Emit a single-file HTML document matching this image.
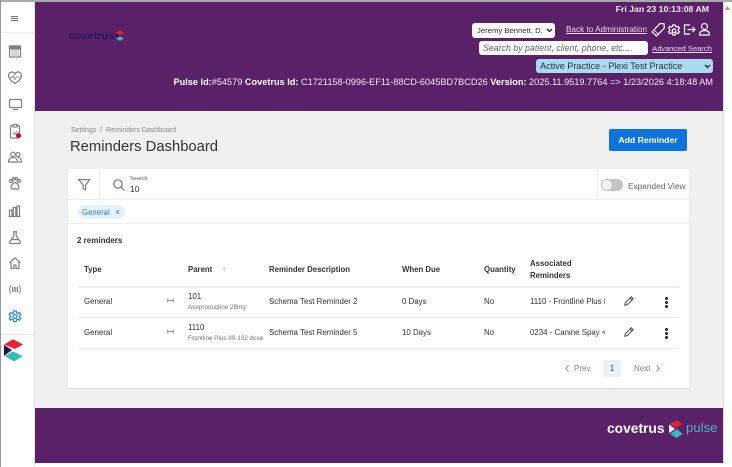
<!DOCTYPE html>
<html><head><meta charset="utf-8"><style>
html,body{margin:0;padding:0;background:#fff}
body{width:732px;height:467px;position:relative;overflow:hidden;font-family:"Liberation Sans",sans-serif;color:#333}
#p{position:absolute;left:0;top:0;width:732px;height:467px;filter:blur(.35px)}
.a{position:absolute;white-space:nowrap}
svg{position:absolute;overflow:visible}
.ic{fill:none;stroke:#808080;stroke-width:1.200}
.w{color:#fff}
.h{font-weight:bold;font-size:7.800px;color:#333}
.c{font-size:7.900px;color:#333}
.l{position:absolute;height:1px;background:#eee}
</style></head><body><div id="p">
<div class="a" style="left:0;top:0;width:732px;height:2px;background:#aaa"></div>
<div class="a" style="left:0;top:0;width:1px;height:467px;background:#999"></div>
<div class="a" style="left:34px;top:2px;width:1px;height:465px;background:#e4e4e4"></div>
<div class="a" style="left:35px;top:2px;width:688px;height:109px;background:#5b2168"></div>
<div class="a" style="left:35px;top:111px;width:688px;height:297px;background:#f0f0f0"></div>
<div class="a" style="left:35px;top:408px;width:688px;height:55px;background:#5b2168"></div>
<div class="a" style="left:723px;top:2px;width:1px;height:461px;background:#ddd"></div>
<div class="a" style="left:1px;top:32px;width:33px;height:1px;background:#eee"></div>
<div class="a" style="left:1px;top:334px;width:33px;height:1px;background:#e8e8e8"></div>
<svg style="left:725px;top:6px" width="5" height="4"><path d="M0 4L2.500 0 5 4z" fill="#999"/></svg>

<div class="a" style="left:11px;top:16px;width:7px;height:1px;background:#777;box-shadow:0 2px 0 #777,0 4px 0 #777"></div>

<svg class="ic" style="left:9px;top:45px" width="12" height="12"><rect x=".5" y="1" width="11" height="11" rx="1"/><rect x=".5" y="1" width="11" height="3" fill="#808080"/><path d="M2.500 6h7M2.500 8h7M2.500 10h7" stroke-dasharray="1 1"/></svg>
<svg class="ic" style="left:8px;top:71px" width="14" height="13"><path d="M7 12.500C3 9.500.5 7.500.5 4.500.5 2.500 2 1 3.800 1 5.200 1 6.400 1.800 7 3c.6-1.200 1.800-2 3.200-2C12 1 13.500 2.500 13.500 4.500c0 3-2.500 5-6.500 8z"/><path d="M1 6.500h3.500l1-2 1.500 4 1.500-2.500h4.500" stroke-width=".8"/></svg>
<svg class="ic" style="left:9px;top:99px" width="13" height="11"><rect x=".5" y=".5" width="12" height="8" rx="1.200"/><path d="M4 10.500h5"/></svg>
<svg class="ic" style="left:10px;top:124px" width="11" height="15"><rect x=".5" y="1.500" width="9" height="12.500" rx="1.200"/><rect x="3" y=".5" width="4" height="2.500" fill="#fff"/><path d="M3 9l1.500 1.500L7 7" stroke-width=".8"/></svg>
<div class="a" style="left:16px;top:133px;width:5px;height:5px;border-radius:50%;background:#d5002b"></div>
<svg class="ic" style="left:8px;top:151px" width="14" height="12"><circle cx="5" cy="3.500" r="2.300"/><circle cx="10" cy="3.500" r="2"/><path d="M.5 11c0-3 2-4.500 4.500-4.500S9.500 8 9.500 11zM10 6.500c2 0 3.500 1.500 3.500 4.500h-3"/></svg>
<svg class="ic" style="left:8px;top:177px" width="14" height="13"><circle cx="3" cy="4" r="1.400"/><circle cx="5.500" cy="1.800" r="1.300"/><circle cx="8.500" cy="1.800" r="1.300"/><circle cx="11" cy="4" r="1.400"/><path d="M7 5.500c-2 0-4 3-4 5 0 1.500 1.500 1.800 2.500 1.500.8-.3 2.200-.3 3 0 1 .3 2.500 0 2.500-1.500 0-2-2-5-4-5z"/></svg>
<svg class="ic" style="left:8px;top:205px" width="13" height="12"><path d="M.5 11.500h12M1.500 11.500V5h2.500v6.500M5.300 11.500V2.500h2.500v9M9 11.500V1h2.500v10.500"/></svg>
<svg class="ic" style="left:9px;top:231px" width="12" height="13"><path d="M4 .7h4M4.800.7v4L.8 11c-.4.800 0 1.500.8 1.500h8.800c.8 0 1.200-.7.800-1.500l-4-6.300V.7M2.800 8.500h6.400"/></svg>
<svg class="ic" style="left:9px;top:257px" width="12" height="12"><path d="M.5 6L6 .8 11.500 6M2 5v6.500h3V8h2v3.500h3V5"/></svg>
<svg class="ic" style="left:9px;top:285px" width="12" height="9"><path d="M1.500.5C.5 3 .5 6 1.500 8.500M10.500.5c1 2.500 1 5.500 0 8M3.500 2v5M5.200 2v5M6.800 2v5M8.500 2v5" stroke-width="1"/></svg>
<svg style="left:8px;top:310px;fill:none;stroke:#1b84e0;stroke-width:1.200" width="14" height="14"><path d="M5.800 1h2.400l.4 1.800 1.400.6 1.600-1 1.200 2-1.300 1.200v1.400l1.300 1.200-1.200 2-1.600-1-1.400.6-.4 1.800H5.800l-.4-1.800-1.400-.6-1.600 1-1.200-2 1.300-1.200V5.600L1.200 4.400l1.200-2 1.600 1 1.400-.6z"/><circle cx="7" cy="6.500" r="2"/></svg>

<svg style="left:0;top:335px" width="30" height="30"><path d="M4 9.500L13 4.300 23 9.500 15 14z" fill="#e8212e"/><path d="M4 10l8 5-8 6z" fill="#14145a"/><path d="M5 21l8-4.500 10 4.500-9 5.500z" fill="#33bfb6"/></svg>

<!-- header logo -->
<div class="a" style="left:69px;top:30px;font-size:10.500px;font-weight:bold;color:#1e1a66;letter-spacing:.2px">covetrus</div>
<svg style="left:115px;top:30px" width="10" height="12"><path d="M1 2.500L5 0l4 2.500-4 2.500z" fill="#e8212e"/><path d="M1 3.500l3 2-3 2z" fill="#14145a"/><path d="M1 8.500L5 6.500l4 2-4 2.500z" fill="#33bfb6"/></svg>

<!-- header right -->
<div class="a w" style="right:23px;top:4px;font-size:8.700px;font-weight:bold;color:#f2e8f5">Fri Jan 23 10:13:08 AM</div>
<div class="a" style="left:472px;top:23px;width:83px;height:15px;background:#fff;border-radius:3px;font-size:7.700px;line-height:15px;text-indent:5px;color:#333">Jeremy Bennett, D.</div>
<svg style="left:546px;top:28px" width="7" height="5"><path d="M1 1l2.500 2.500L6 1" fill="none" stroke="#222" stroke-width="1.300"/></svg>
<div class="a" style="left:566px;top:25px;font-size:8.200px;color:#e8d8ec;text-decoration:underline">Back to Administration</div>
<svg style="left:651px;top:22px;fill:none;stroke:#fff;stroke-width:1.200" width="70" height="15"><path d="M1 10L9 1.500l4 .2.300 4.300L5.500 14z"/><path d="M3 8l4 4" stroke-width=".8"/><path d="M21.800 3h2.400l.4 1.500 1.300.6 1.400-.8 1.200 2-1.200 1v1.400l1.200 1-1.200 2-1.400-.8-1.300.6-.4 1.500h-2.400l-.4-1.500-1.300-.6-1.400.8-1.200-2 1.200-1V7.300l-1.200-1 1.200-2 1.400.8 1.300-.6z"/><circle cx="23" cy="8.800" r="1.800"/><path d="M39 3h-5.500v9H39M36.500 7.500h7.500M41.500 5l2.500 2.500-2.500 2.500"/><circle cx="53.500" cy="4.500" r="3"/><path d="M48.500 13c0-3 2-4.500 5-4.500s5 1.500 5 4.500z"/></svg>
<div class="a" style="left:479px;top:41px;width:169px;height:14px;background:#fff;border-radius:3px;font-size:8.800px;line-height:14px;text-indent:4px;font-style:italic;color:#666">Search by patient, client, phone, etc....</div>
<div class="a" style="left:652px;top:44px;font-size:7.600px;color:#e8d8ec;text-decoration:underline">Advanced Search</div>
<div class="a" style="left:536px;top:59px;width:177px;height:14px;background:#a8dcec;border-radius:3px;font-size:9.100px;line-height:15px;text-indent:4px;color:#2c2c4c">Active Practice - Plexi Test Practice</div>
<svg style="left:704px;top:64px" width="7" height="5"><path d="M1 1l2.500 2.500L6 1" fill="none" stroke="#222" stroke-width="1.300"/></svg>
<div class="a" style="right:19px;top:77px;font-size:9.180px;color:#f2e8f5"><b style="color:#fff">Pulse Id:</b>#54579 <b style="color:#fff">Covetrus Id:</b> C1721158-0996-EF11-88CD-6045BD7BCD26 <b style="color:#fff">Version:</b> 2025.11.9519.7764 =&gt; 1/23/2026 4:18:48 AM</div>

<!-- page head -->
<div class="a" style="left:71px;top:127px;font-size:7px;color:#888">Settings &nbsp;/&nbsp; Reminders Dashboard</div>
<div class="a" style="left:70px;top:139px;font-size:14.800px;color:#333">Reminders Dashboard</div>
<div class="a" style="left:609px;top:129px;width:78px;height:22px;background:#0e74dd;border-radius:2px;color:#fff;font-size:8.700px;font-weight:bold;line-height:22px;text-align:center">Add Reminder</div>

<!-- card -->
<div class="a" style="left:68px;top:169px;width:621px;height:219px;background:#fff;box-shadow:0 1px 1px #ddd"></div>
<div class="l" style="left:68px;top:199px;width:621px"></div>
<div class="l" style="left:68px;top:223px;width:621px"></div>
<div class="a" style="left:99px;top:169px;width:1px;height:30px;background:#eee"></div>
<div class="a" style="left:597px;top:169px;width:1px;height:30px;background:#eee"></div>
<svg style="left:78px;top:179px;fill:none;stroke:#777;stroke-width:1.100" width="13" height="12"><path d="M.7.700h11L7.500 6v5L5.200 9.500V6z"/></svg>
<svg style="left:113px;top:179px;fill:none;stroke:#777;stroke-width:1.200" width="13" height="13"><circle cx="5" cy="5" r="4.200"/><path d="M8 8l3.500 3.500"/></svg>
<div class="a" style="left:130px;top:176px;font-size:5.500px;color:#555">Search</div>
<div class="a" style="left:130px;top:184px;font-size:8.500px;color:#333">10</div>
<div class="a" style="left:601px;top:179px;width:22px;height:12px;border-radius:6px;background:#c4c4c4"></div>
<div class="a" style="left:602px;top:180px;width:10px;height:10px;border-radius:50%;background:#f2f2f2"></div>
<div class="a" style="left:628px;top:181px;font-size:8.300px;color:#666">Expanded View</div>

<div class="a" style="left:78px;top:205px;width:47px;height:14px;border-radius:7px;background:#e4f2fd"></div>
<div class="a" style="left:82px;top:208px;font-size:7.800px;color:#3a7cc0">General</div>
<div class="a" style="left:115px;top:207px;font-size:9px;color:#3a7cc0">×</div>
<div class="a" style="left:77px;top:236px;font-size:8px;font-weight:bold;color:#333">2 reminders</div>

<div class="a h" style="left:84px;top:265px">Type</div>
<div class="a h" style="left:188px;top:265px">Parent</div>
<div class="a" style="left:222px;top:265px;font-size:8px;color:#888">↑</div>
<div class="a h" style="left:269px;top:265px">Reminder Description</div>
<div class="a h" style="left:402px;top:265px">When Due</div>
<div class="a h" style="left:484px;top:265px">Quantity</div>
<div class="a h" style="left:530px;top:259px">Associated</div>
<div class="a h" style="left:530px;top:271px">Reminders</div>
<div class="l" style="left:78px;top:286px;width:601px;height:2px"></div>
<div class="l" style="left:78px;top:317px;width:601px;height:1px"></div>
<div class="l" style="left:78px;top:348px;width:601px;height:1px"></div>

<div class="a c" style="left:84px;top:297px">General</div>
<svg style="left:167px;top:298px;fill:none;stroke:#999" width="7" height="6"><path d="M.7.500v4M6.300.500v4M.7 2.500h5.600" stroke-width="1.100"/></svg>
<div class="a c" style="left:188px;top:292px">101</div>
<div class="a" style="left:188px;top:304px;font-size:6.300px;color:#777">Acepromazine 25mg</div>
<div class="a c" style="left:269px;top:297px">Schema Test Reminder 2</div>
<div class="a c" style="left:402px;top:297px">0 Days</div>
<div class="a c" style="left:484px;top:297px">No</div>
<div class="a c" style="left:530px;top:297px;width:75px;overflow:hidden">1110 - Frontline Plus 89</div>
<svg style="left:624px;top:296px;fill:none;stroke:#555;stroke-width:1.100" width="10" height="10"><path d="M.8 9.200l.6-2.600L7.200.8 9.200 2.800 3.400 8.600zM6 2l2 2"/></svg>
<div class="a" style="left:665px;top:297px;width:3px;height:3px;border-radius:50%;background:#222;box-shadow:0 4px 0 #222,0 8px 0 #222"></div>

<div class="a c" style="left:84px;top:328px">General</div>
<svg style="left:167px;top:329px;fill:none;stroke:#999" width="7" height="6"><path d="M.7.500v4M6.300.500v4M.7 2.500h5.600" stroke-width="1.100"/></svg>
<div class="a c" style="left:188px;top:323px">1110</div>
<div class="a" style="left:188px;top:335px;width:75px;overflow:hidden;font-size:6.300px;color:#777">Frontline Plus 89-132 dose</div>
<div class="a c" style="left:269px;top:328px">Schema Test Reminder 5</div>
<div class="a c" style="left:402px;top:328px">10 Days</div>
<div class="a c" style="left:484px;top:328px">No</div>
<div class="a c" style="left:530px;top:328px;width:75px;overflow:hidden">0234 - Canine Spay &lt;</div>
<svg style="left:624px;top:327px;fill:none;stroke:#555;stroke-width:1.100" width="10" height="10"><path d="M.8 9.200l.6-2.600L7.200.8 9.200 2.800 3.400 8.600zM6 2l2 2"/></svg>
<div class="a" style="left:665px;top:328px;width:3px;height:3px;border-radius:50%;background:#222;box-shadow:0 4px 0 #222,0 8px 0 #222"></div>

<svg style="left:565px;top:365px;fill:none;stroke:#6aa8e0;stroke-width:1" width="4" height="7"><path d="M3.500.5L.8 3.500l2.700 3"/></svg>
<div class="a" style="left:574px;top:364px;font-size:8px;color:#888">Prev</div>
<div class="a" style="left:603px;top:360px;width:18px;height:17px;background:#e6f3fc;border-radius:2px;font-size:8px;line-height:17px;text-align:center;color:#444">1</div>
<div class="a" style="left:634px;top:364px;font-size:8px;color:#888">Next</div>
<svg style="left:656px;top:365px;fill:none;stroke:#6aa8e0;stroke-width:1" width="4" height="7"><path d="M.5.500l2.700 3-2.700 3"/></svg>

<!-- footer logo -->
<div class="a" style="left:607px;top:421px;font-size:13.800px;font-weight:bold;color:#fff">covetrus</div>
<svg style="left:664px;top:416px" width="24" height="24"><path d="M5.500 8L13 4.500 18.500 8 12 12z" fill="#e8212e"/><path d="M5 8.500l6 4.500-6 4z" fill="#fff"/><path d="M6 18l7-5 5.500 5-6 4z" fill="#33bfb6"/></svg>
<div class="a" style="left:686px;top:420px;font-size:13.200px;color:#4fb3bf">pulse</div>
</div></body></html>
